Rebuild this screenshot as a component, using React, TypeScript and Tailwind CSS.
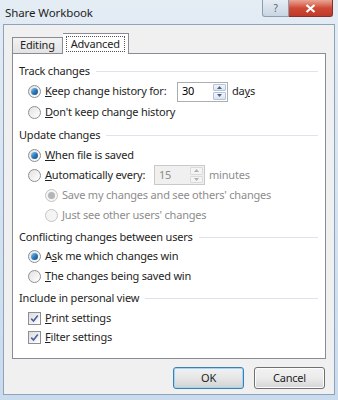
import React from "react";

const font = { fontFamily: '"Noto Sans", "Open Sans", sans-serif' };

function Radio({ checked, disabled }: { checked?: boolean; disabled?: boolean }) {
  return (
    <span
      className={`relative inline-flex size-[13px] shrink-0 items-center justify-center rounded-full border ${
        disabled ? "border-[#c4c4c4] bg-[#f4f4f4]" : "border-[#8e8f8f] bg-gradient-to-br from-[#e2e2e2] to-[#ffffff]"
      }`}
    >
      {checked && (
        <span
          className={`size-[7px] rounded-full ${
            disabled ? "bg-[#b5b5b5]" : "bg-gradient-to-br from-[#8fd0f5] via-[#2e7bbd] to-[#154f86]"
          }`}
        />
      )}
    </span>
  );
}

function Check() {
  return (
    <span className="inline-flex size-[13px] shrink-0 items-center justify-center border border-[#8e8f8f] bg-gradient-to-br from-[#dcdcdc] to-[#ffffff]">
      <svg width="9" height="9" viewBox="0 0 9 9">
        <path d="M1.2 4.6 L3.5 7 L7.8 1.4" fill="none" stroke="#4c61a0" strokeWidth="1.6" />
      </svg>
    </span>
  );
}

function Spin({ value, disabled }: { value: string; disabled?: boolean }) {
  return (
    <span
      className={`flex h-[20px] w-[51px] shrink-0 items-center border ${
        disabled ? "border-[#c9c9c9] bg-[#f0f0f0] text-[#8d8d8d]" : "border-[#abadb3] bg-white text-black"
      }`}
    >
      <span className="flex-1 pl-[4px]">{value}</span>
      <span className="flex h-full w-[15px] flex-col gap-[1px] p-[1px]">
        {[0, 1].map((i) => (
          <span
            key={i}
            className={`flex flex-1 items-center justify-center rounded-[1px] border ${
              disabled ? "border-[#dadada] bg-[#f4f4f4]" : "border-[#b4c4d6] bg-gradient-to-b from-[#f3f7fb] to-[#d9e4ef]"
            }`}
          >
            <svg width="5" height="3" viewBox="0 0 5 3">
              <path d={i === 0 ? "M0 3 L2.5 0 L5 3 Z" : "M0 0 L2.5 3 L5 0 Z"} fill={disabled ? "#b0b0b0" : "#4d6185"} />
            </svg>
          </span>
        ))}
      </span>
    </span>
  );
}

function Group({ title, children }: { title: string; children: React.ReactNode }) {
  return (
    <div>
      <div className="flex h-[20px] items-center gap-[6px]">
        <span className="whitespace-nowrap">{title}</span>
        <span className="h-px flex-1 bg-[#dde3ea]" />
      </div>
      <div className="flex flex-col">{children}</div>
    </div>
  );
}

function Row({ indent = 9, h = 20, children }: { indent?: number; h?: number; children: React.ReactNode }) {
  return (
    <div className="flex items-center gap-[4px] whitespace-nowrap" style={{ paddingLeft: indent, height: h }}>
      {children}
    </div>
  );
}

export default function App() {
  return (
    <div
      className="relative h-[400px] w-[338px] overflow-hidden bg-gradient-to-b from-[#e4ecf4] via-[#d6e3f0] to-[#c9dbed] text-[11px] tracking-[-0.2px] text-[#1e1e1e]"
      style={font}
    >
      {/* title bar */}
      <div className="flex h-[24px] items-start justify-between pl-[5px]">
        <span className="pt-[4px] text-[11.5px] tracking-[-0.1px] text-[#1e1e1e]">Share Workbook</span>
        <div className="flex">
          <span className="flex h-[17px] w-[27px] items-center justify-center rounded-bl-[3px] border border-t-0 border-[#8d9cb0] bg-gradient-to-b from-[#e6edf4] to-[#c8d5e2] text-[10px] text-[#5a6676]">
            ?
          </span>
          <span className="mr-[5px] flex h-[17px] w-[44px] items-center justify-center rounded-br-[3px] border border-l-0 border-t-0 border-[#84312a] bg-gradient-to-b from-[#e8a596] via-[#cf4a36] to-[#c0392b]">
            <svg width="11" height="9" viewBox="0 0 11 9">
              <path d="M1.5 1 L9.5 8 M9.5 1 L1.5 8" stroke="#ffffff" strokeWidth="2.2" />
            </svg>
          </span>
        </div>
      </div>

      {/* client area */}
      <div className="mx-[3px] flex h-[371px] flex-col border border-[#8da3bb] bg-[#f0f0f0] px-[8px] pt-[8px]">
        {/* tabs */}
        <div className="flex h-[20px] items-end">
          <div className="flex h-[16px] items-center border border-b-0 border-[#898c95] bg-gradient-to-b from-[#f2f2f2] to-[#e3e3e3] px-[7px]">
            Editing
          </div>
          <div className="-mb-px z-10 flex h-[21px] items-center border border-b-0 border-l-0 border-[#898c95] bg-white px-[3px]">
            <span className="border border-dotted border-[#555] px-[4px] leading-[14px]">Advanced</span>
          </div>
        </div>
        <div className="h-[306px] border border-[#898c95] bg-white pl-[6px] pr-[7px] pt-[7px]">
          <Group title="Track changes">
            <Row h={21}>
              <Radio checked />
              <span className="w-[128px]">
                <u>K</u>eep change history for:
              </span>
              <Spin value="30" />
              <span>
                da<u>y</u>s
              </span>
            </Row>
            <Row h={21}>
              <Radio />
              <span>
                <u>D</u>on't keep change history
              </span>
            </Row>
          </Group>
          <div className="h-[2px]" />
          <Group title="Update changes">
            <Row>
              <Radio checked />
              <span>
                <u>W</u>hen file is saved
              </span>
            </Row>
            <Row>
              <Radio />
              <span className="w-[105px]">
                <u>A</u>utomatically every:
              </span>
              <Spin value="15" disabled />
              <span className="text-[#8d8d8d]">minutes</span>
            </Row>
            <Row indent={26}>
              <Radio checked disabled />
              <span className="text-[#8d8d8d]">Save my changes and see others' changes</span>
            </Row>
            <Row indent={26}>
              <Radio disabled />
              <span className="text-[#8d8d8d]">Just see other users' changes</span>
            </Row>
          </Group>
          <div className="h-[2px]" />
          <Group title="Conflicting changes between users">
            <Row h={19}>
              <Radio checked />
              <span>
                A<u>s</u>k me which changes win
              </span>
            </Row>
            <Row>
              <Radio />
              <span>
                <u>T</u>he changes being saved win
              </span>
            </Row>
          </Group>
          <div className="h-[2px]" />
          <Group title="Include in personal view">
            <Row>
              <Check />
              <span>
                <u>P</u>rint settings
              </span>
            </Row>
            <Row h={19}>
              <Check />
              <span>
                <u>F</u>ilter settings
              </span>
            </Row>
          </Group>
        </div>

        {/* buttons */}
        <div className="mt-[8px] flex justify-end gap-[10px] pr-[1px]">
          <button className="h-[22px] w-[71px] rounded-[3px] border border-[#3c7fb1] bg-gradient-to-b from-[#f2f2f2] via-[#e6e6e6] to-[#d2d2d2] shadow-[inset_0_0_0_1px_#9fd5f5]">
            OK
          </button>
          <button className="h-[22px] w-[71px] rounded-[3px] border border-[#707070] bg-gradient-to-b from-[#f2f2f2] via-[#ebebeb] to-[#d6d6d6] shadow-[inset_0_0_0_1px_#fcfcfc]">
            Cancel
          </button>
        </div>
      </div>
    </div>
  );
}
